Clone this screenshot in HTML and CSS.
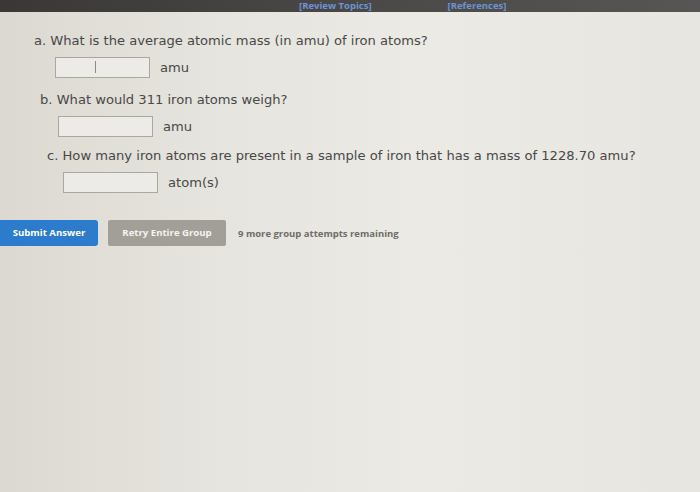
FILE: index.html
```html
<!DOCTYPE html>
<html>
<head>
<meta charset="utf-8">
<link rel="stylesheet" href="styles.css">
</head>
<body>
<div class="topbar">
  <span class="toplink review">[Review Topics]</span>
  <span class="toplink refs">[References]</span>
</div>
<div class="content">
  <div class="question qa">a. What is the average atomic mass (in amu) of iron atoms?</div>
  <div class="answer aa"><span class="box"><span class="caret"></span></span><span class="unit">amu</span></div>
  <div class="question qb">b. What would 311 iron atoms weigh?</div>
  <div class="answer ab"><span class="box"></span><span class="unit">amu</span></div>
  <div class="question qc">c. How many iron atoms are present in a sample of iron that has a mass of 1228.70 amu?</div>
  <div class="answer ac"><span class="box"></span><span class="unit">atom(s)</span></div>
  <div class="actions">
    <span class="btn submit">Submit Answer</span>
    <span class="btn retry">Retry Entire Group</span>
    <span class="remaining">9 more group attempts remaining</span>
  </div>
</div>
</body>
</html>
```
FILE: styles.css
```css
html, body {
  margin: 0;
  padding: 0;
}
body {
  width: 700px;
  height: 492px;
  overflow: hidden;
  background: linear-gradient(90deg, #dcd9d2 0%, #e6e4de 30%, #ebeae5 60%, #e7e6e1 100%);
  font-family: "DejaVu Sans", Verdana, sans-serif;
  color: #4f4f4f;
}
.topbar {
  height: 12px;
  background: linear-gradient(90deg, #3a3836 0%, #4a4846 50%, #585654 100%);
  display: flex;
  align-items: center;
}
.toplink {
  font-family: "Open Sans", sans-serif;
  font-weight: 700;
  font-size: 9.5px;
  line-height: 12px;
  color: #6d93d3;
}
.review { margin-left: 299px; }
.refs { margin-left: 76px; }
.content {
  padding-top: 20px;
}
.question {
  font-size: 13.1px;
  line-height: 18px;
  color: #484848;
}
.qa { margin-left: 34px; }
.qb { margin-left: 40px; margin-top: 13px; }
.qc { margin-left: 47px; margin-top: 10px; }
.answer {
  display: flex;
  align-items: center;
  margin-top: 7px;
}
.aa { margin-left: 55px; }
.ab { margin-left: 58px; }
.ac { margin-left: 63px; }
.box {
  display: block;
  width: 95px;
  height: 21px;
  border: 1px solid #a9a7a2;
  background: #ecebe7;
  position: relative;
  box-sizing: border-box;
}
.caret {
  position: absolute;
  left: 39px;
  top: 3px;
  width: 1px;
  height: 12px;
  background: #8a8a8a;
}
.unit {
  font-size: 13.1px;
  margin-left: 10px;
  color: #484848;
}
.actions {
  display: flex;
  align-items: center;
  margin-top: 27px;
}
.btn {
  font-family: "Open Sans", sans-serif;
  font-weight: 700;
  font-size: 9.6px;
  color: #fff;
  height: 26px;
  line-height: 26px;
  border-radius: 2px;
  text-align: center;
}
.submit {
  width: 98px;
  background: #2d7ccb;
  border-radius: 0 3px 3px 0;
}
.retry {
  width: 118px;
  margin-left: 10px;
  background: #a29f99;
  color: #f4f3f0;
}
.remaining {
  font-family: "Open Sans", sans-serif;
  font-weight: 700;
  font-size: 9.5px;
  color: #6f6d69;
  margin-left: 12px;
}
```
